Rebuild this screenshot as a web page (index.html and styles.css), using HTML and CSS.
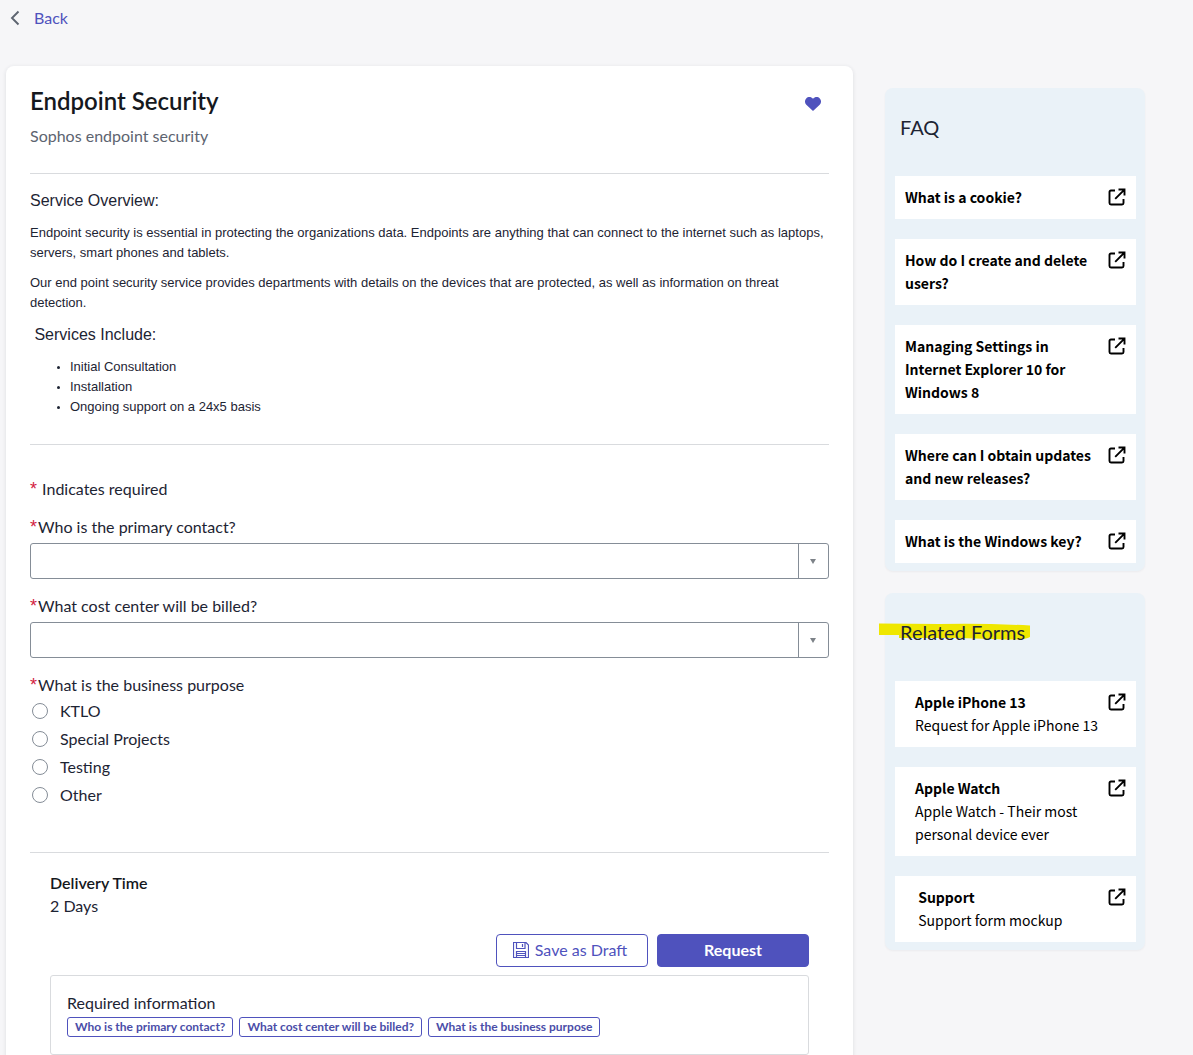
FILE: index.html
```html
<!DOCTYPE html>
<html lang="en">
<head>
<meta charset="utf-8">
<meta name="viewport" content="width=device-width, initial-scale=1">
<title>Endpoint Security</title>
<link rel="stylesheet" href="styles.css">
</head>
<body>
<svg class="sprite" aria-hidden="true">
  <symbol id="open" viewBox="0 0 18 18">
    <path d="M7 2.500H3Q1.500 2.500 1.500 4V15Q1.500 16.500 3 16.500H14Q15.500 16.500 15.500 15V11M10.500 1.500H16.500V7.500M16.200 1.800L7.200 10.800" fill="none" stroke="currentColor" stroke-width="1.900"/>
  </symbol>
</svg>
<nav class="topbar">
  <svg class="chevron" viewBox="0 0 10 16" aria-hidden="true"><path d="M8.500 1.500L2 8L8.500 14.500" fill="none" stroke="currentColor" stroke-width="1.900"/></svg>
  <a href="#">Back</a>
</nav>
<div class="layout">
  <main class="card">
    <header class="card-header">
      <div>
        <h1>Endpoint Security</h1>
        <p class="subtitle">Sophos endpoint security</p>
      </div>
      <button class="favorite" type="button" aria-label="Favorite">
        <svg viewBox="0 0 16 14" aria-hidden="true"><path d="M8 14L1.300 7.700C-.5 5.900-.4 3 1.200 1.400C3-.4 6.100-.4 8 1.700C9.900-.4 13-.4 14.800 1.400C16.400 3 16.500 5.900 14.700 7.700Z" fill="currentColor"/></svg>
      </button>
    </header>
    <section class="overview">
      <h2>Service Overview:</h2>
      <p>Endpoint security is essential in protecting the organizations data. Endpoints are anything that can connect to the internet such as laptops, servers, smart phones and tablets.</p>
      <p>Our end point security service provides departments with details on the devices that are protected, as well as information on threat detection.</p>
      <h2>&nbsp;Services Include:</h2>
      <ul>
        <li>Initial Consultation</li>
        <li>Installation</li>
        <li>Ongoing support on a 24x5 basis</li>
      </ul>
    </section>
    <form>
      <div class="questions">
        <p class="hint"><span class="star">*</span> Indicates required</p>
        <div class="field">
          <label for="contact"><span class="star">*</span>Who is the primary contact?</label>
          <div class="select"><select id="contact"><option></option></select></div>
        </div>
        <div class="field">
          <label for="cost"><span class="star">*</span>What cost center will be billed?</label>
          <div class="select"><select id="cost"><option></option></select></div>
        </div>
        <fieldset>
          <legend><span class="star">*</span>What is the business purpose</legend>
          <label class="choice"><input type="radio" name="purpose">KTLO</label>
          <label class="choice"><input type="radio" name="purpose">Special Projects</label>
          <label class="choice"><input type="radio" name="purpose">Testing</label>
          <label class="choice"><input type="radio" name="purpose">Other</label>
        </fieldset>
      </div>
      <div class="summary">
        <p class="delivery">Delivery Time</p>
        <p>2 Days</p>
        <div class="actions">
          <button class="btn draft" type="button">
            <svg class="disk" viewBox="0 0 16 16" aria-hidden="true"><path d="M.5.5H13L15.500 3V15.500H.5ZM3.500.5V6.500H12V.5M9.500 2V5M3.500 15V9.500H12.500V15M3.500 11.500H12.500M3.500 13.500H12.500" fill="none" stroke="currentColor" stroke-width="1.200"/></svg>
            Save as Draft
          </button>
          <button class="btn primary" type="submit">Request</button>
        </div>
        <div class="required">
          <p>Required information</p>
          <div class="chips">
            <button class="chip" type="button">Who is the primary contact?</button>
            <button class="chip" type="button">What cost center will be billed?</button>
            <button class="chip" type="button">What is the business purpose</button>
          </div>
        </div>
      </div>
    </form>
  </main>
  <aside class="sidebar">
    <section class="panel">
      <h2>FAQ</h2>
      <div class="items">
        <a class="item" href="#"><b>What is a cookie?</b><svg class="open"><use href="#open"/></svg></a>
        <a class="item" href="#"><b>How do I create and delete users?</b><svg class="open"><use href="#open"/></svg></a>
        <a class="item" href="#"><b>Managing Settings in Internet Explorer 10 for Windows 8</b><svg class="open"><use href="#open"/></svg></a>
        <a class="item" href="#"><b>Where can I obtain updates and new releases?</b><svg class="open"><use href="#open"/></svg></a>
        <a class="item" href="#"><b>What is the Windows key?</b><svg class="open"><use href="#open"/></svg></a>
      </div>
    </section>
    <section class="panel">
      <h2 class="marked">
        <svg class="marker" viewBox="0 0 151 17" aria-hidden="true"><path d="M0 0.500L60 1Q105 0 151 2.500V14Q146 17 128 16.500L80 15H20V12H0Z" fill="#efe700"/></svg>
        <span>Related Forms</span>
      </h2>
      <div class="items">
        <a class="item form" href="#"><span><b>Apple iPhone 13</b><br>Request for Apple iPhone 13</span><svg class="open"><use href="#open"/></svg></a>
        <a class="item form" href="#"><span><b>Apple Watch</b><br>Apple Watch - Their most personal device ever</span><svg class="open"><use href="#open"/></svg></a>
        <a class="item form" href="#"><span><b>&nbsp;Support</b><br>&nbsp;Support form mockup</span><svg class="open"><use href="#open"/></svg></a>
      </div>
    </section>
  </aside>
</div>
</body>
</html>
```
FILE: styles.css
```css
* { box-sizing: border-box; }
body {
  margin: 0;
  background: #f6f6f8;
  color: #1d2433;
  font: 16px/24px Lato, sans-serif;
}
h1, h2, p, ul, fieldset { margin: 0; padding: 0; border: 0; }
button, select { font: inherit; }
.sprite { display: none; }

.topbar {
  display: flex;
  align-items: center;
  gap: 14px;
  height: 36px;
  padding: 0 10px;
}
.topbar a { color: #4f52bd; text-decoration: none; }
.chevron { width: 10px; height: 16px; color: #5d6470; }

.layout {
  display: flex;
  align-items: flex-start;
  gap: 32px;
  padding: 30px 48px 0 6px;
}
.card {
  flex: 1;
  min-width: 0;
  padding: 19px 24px 24px;
  background: #fff;
  border-radius: 8px;
  box-shadow: 0 1px 4px rgba(30, 40, 60, .12);
}
.card-header {
  display: flex;
  justify-content: space-between;
  align-items: flex-start;
  padding-bottom: 25px;
  border-bottom: 1px solid #d9dbde;
}
h1 { font-size: 24px; line-height: 32px; font-weight: 600; color: #15181d; }
.subtitle { margin-top: 7px; color: #5d6470; }
.favorite {
  display: flex;
  padding: 12px 8px;
  border: 0;
  background: none;
  color: #4f52bd;
}
.favorite svg { width: 16px; height: 14px; }

.overview {
  display: flex;
  flex-direction: column;
  gap: 10px;
  padding: 15px 0 27px;
  border-bottom: 1px solid #d9dbde;
  font: 13px/20px "Liberation Sans", Arial, sans-serif;
}
.overview h2 { font-size: 16px; line-height: 24px; font-weight: 400; }
.overview ul { padding-left: 40px; }
.overview li::marker { font-size: 10px; }

.questions { padding: 32px 0 43px; border-bottom: 1px solid #d9dbde; }
.hint { margin-bottom: 14px; }
.star {
  display: inline-block;
  width: 8px;
  color: #d2213f;
  font: 18px/20px "Liberation Sans", Arial, sans-serif;
}
.field { margin-bottom: 15px; }
.field label, .hint, legend { display: block; height: 24px; padding: 0; }
.select { position: relative; margin-top: 4px; }
.select select {
  display: block;
  width: 100%;
  height: 36px;
  padding: 0 40px 0 10px;
  appearance: none;
  border: 1px solid #858d97;
  border-radius: 3px;
  background: #fff;
}
.select::before {
  content: "";
  position: absolute;
  top: 0;
  right: 30px;
  height: 100%;
  border-left: 1px solid #858d97;
  pointer-events: none;
}
.select::after {
  content: "";
  position: absolute;
  top: 16px;
  right: 13px;
  border: 3px solid transparent;
  border-top: 5px solid #7d8288;
  border-bottom: 0;
  pointer-events: none;
}
.choice { display: flex; align-items: center; gap: 12px; height: 28px; padding-left: 2px; }
.choice input {
  width: 16px;
  height: 16px;
  margin: 0;
  appearance: none;
  border: 1px solid #858d97;
  border-radius: 50%;
}
.choice input:checked { border: 5px solid #4f52bd; }

.summary { padding: 18px 20px 0; line-height: 23px; }
.delivery { font-weight: 600; color: #15181d; }
.actions { display: flex; justify-content: flex-end; gap: 9px; margin: 17px 0 8px; }
.btn {
  display: flex;
  align-items: center;
  justify-content: center;
  gap: 6px;
  width: 152px;
  height: 33px;
  padding: 0 0 2px;
  border: 1px solid #4f52bd;
  border-radius: 4px;
  background: #fff;
  color: #4f52bd;
}
.btn.draft { padding-right: 4px; }
.btn.primary { background: #4f52bd; color: #fff; font-weight: 700; }
.disk { width: 16px; height: 16px; }
.required { padding: 15px 16px 17px; border: 1px solid #d9dbde; border-radius: 3px; }
.chips { display: flex; flex-wrap: wrap; gap: 6px; margin-top: 3px; }
.chip {
  height: 20px;
  padding: 0 7px;
  border: 1px solid #4f52bd;
  border-radius: 3px;
  background: #fff;
  color: #4a4da8;
  font-size: 12px;
  line-height: 18px;
  font-weight: 700;
}

.sidebar { display: grid; gap: 22px; width: 260px; margin-top: 22px; }
.panel {
  padding: 27px 9px 8px 10px;
  background: #eaf2f8;
  border-radius: 8px;
  box-shadow: 0 1px 2px rgba(30, 40, 60, .05);
}
.panel h2 {
  margin: 0 5px 37px;
  font-size: 20px;
  line-height: 24px;
  font-weight: 400;
}
.marked { position: relative; }
.marked span { position: relative; }
.marker { position: absolute; left: -21px; top: 3px; width: 151px; height: 17px; }
.items { display: grid; gap: 20px; }
.item {
  display: flex;
  justify-content: space-between;
  align-items: flex-start;
  gap: 12px;
  padding: 10px;
  background: #fff;
  color: #000;
  font: 14px/23px "Noto Sans CJK JP", sans-serif;
  text-decoration: none;
}
.item.form { gap: 0; padding-left: 20px; }
.open { flex: none; width: 18px; height: 18px; margin-top: 2px; }
```
